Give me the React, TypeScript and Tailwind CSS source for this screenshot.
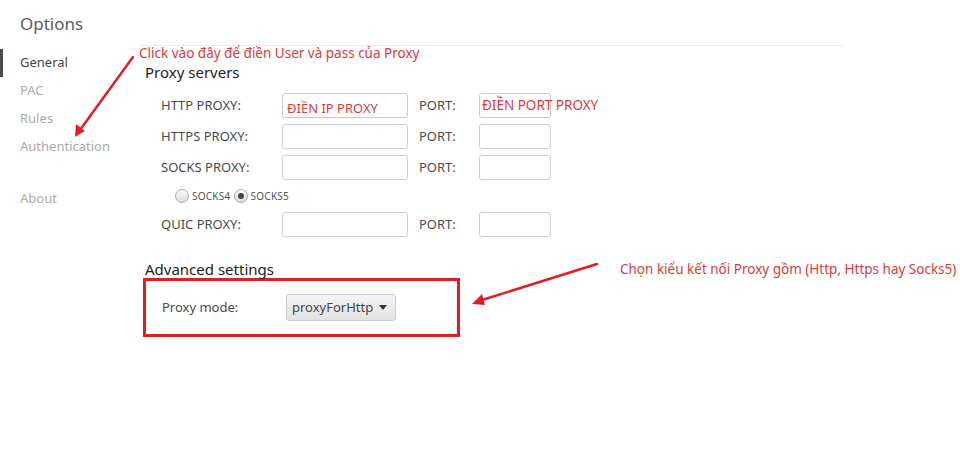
import { ReactNode } from "react";

const font = { fontFamily: '"Noto Sans", "Open Sans", Arial, sans-serif' };

const navItems = [
  { name: "General", active: true },
  { name: "PAC" },
  { name: "Rules" },
  { name: "Authentication" },
];

function Field({ label, hint, portHint }: { label: string; hint?: string; portHint?: string }) {
  return (
    <div className="flex h-[25px] items-center">
      <span className="w-[121px] text-[13px] text-[#4a4a4a]">{label}</span>
      <div className="relative h-[25px] w-[126px] rounded-[3px] border border-[#ccc] bg-white">
        {hint && (
          <span className="absolute left-[4px] top-[5px] text-[13px] whitespace-nowrap text-[#e0393b]">{hint}</span>
        )}
      </div>
      <span className="ml-[11px] w-[60px] text-[13px] text-[#4a4a4a]">PORT:</span>
      <div className="relative h-[25px] w-[72px] rounded-[3px] border border-[#ccc] bg-white">
        {portHint && (
          <span className="absolute left-[2px] top-[1px] text-[13.5px] whitespace-nowrap text-[#e0393b]">{portHint}</span>
        )}
      </div>
    </div>
  );
}

function Radio({ checked, children }: { checked?: boolean; children: ReactNode }) {
  return (
    <label className="flex items-center gap-[3px]">
      <span className="grid h-[14px] w-[14px] place-items-center rounded-full border border-[#aaa] bg-gradient-to-b from-[#fafafa] to-[#ddd]">
        {checked && <span className="h-[6px] w-[6px] rounded-full bg-[#444]" />}
      </span>
      <span className="text-[10px] tracking-wide text-[#555]">{children}</span>
    </label>
  );
}

export default function App() {
  return (
    <div className="relative h-[458px] w-[960px] overflow-hidden bg-white" style={font}>
      <h1 className="pl-[20px] pt-[12px] text-[17px] leading-[24px] text-[#5c5c5c]">Options</h1>

      <div className="mt-[9px] flex">
        <nav className="w-[138px] pt-[4px]">
          <ul className="flex flex-col">
            {navItems.map((item) => (
              <li
                key={item.name}
                className={
                  item.active
                    ? "flex h-[28px] items-center border-l-[3px] border-[#474c52] pl-[17px] text-[13px] text-[#444]"
                    : "flex h-[28px] items-center pl-[20px] text-[13px] text-[#aaa]"
                }
              >
                {item.name}
              </li>
            ))}
            <li className="mt-[24px] flex h-[28px] items-center pl-[20px] text-[13px] text-[#aaa]">About</li>
          </ul>
        </nav>

        <main className="w-[705px] border-t border-[#ececec]">
          <h2 className="pl-[7px] pt-[16px] text-[15px] leading-[20px] text-[#222]">Proxy servers</h2>

          <div className="mt-[11px] flex flex-col gap-[6px] pl-[23px]">
            <Field label="HTTP PROXY:" hint="ĐIỀN IP PROXY" portHint="ĐIỀN PORT PROXY" />
            <Field label="HTTPS PROXY:" />
            <Field label="SOCKS PROXY:" />
            <div className="flex h-[20px] items-center gap-[3px] pl-[14px]">
              <Radio>SOCKS4</Radio>
              <Radio checked>SOCKS5</Radio>
            </div>
            <Field label="QUIC PROXY:" />
          </div>

          <h2 className="pl-[7px] pt-[23px] text-[15px] leading-[18px] text-[#222]">Advanced settings</h2>

          <div className="ml-[5px] flex h-[59px] w-[317px] items-center border-[3px] border-[#e01e25] pl-[16px]">
            <span className="w-[124px] text-[13px] text-[#4a4a4a]">Proxy mode:</span>
            <div className="flex h-[27px] w-[110px] items-center justify-between rounded-[3px] border border-[#ccc] bg-gradient-to-b from-[#f4f4f4] to-[#e2e2e2] pl-[5px] pr-[8px]">
              <span className="text-[13px] text-[#444]">proxyForHttp</span>
              <svg width="8" height="5" viewBox="0 0 8 5">
                <path d="M0 0h8L4 5z" fill="#333" />
              </svg>
            </div>
          </div>
        </main>
      </div>

      <span className="absolute left-[139px] top-[43px] text-[13.5px] text-[#e0393b]">
        Click vào đây để điền User và pass của Proxy
      </span>
      <span className="absolute left-[620px] top-[259px] text-[13.5px] text-[#e0393b]">
        Chọn kiểu kết nối Proxy gồm (Http, Https hay Socks5)
      </span>

      <svg className="pointer-events-none absolute left-0 top-0" width="960" height="458">
        <g stroke="#e01e25" strokeWidth="2.5" strokeLinecap="round">
          <line x1="133" y1="57" x2="80" y2="130" />
          <line x1="597" y1="264" x2="482" y2="300" />
        </g>
        <path d="M75 137 L76 124 L85 131 Z" fill="#e01e25" />
        <path d="M472 304 L482 294 L485 305 Z" fill="#e01e25" />
      </svg>
    </div>
  );
}
